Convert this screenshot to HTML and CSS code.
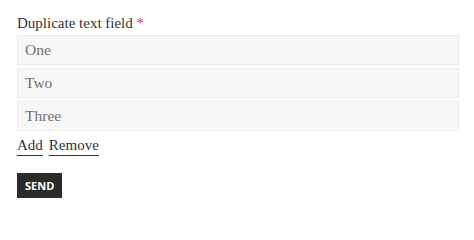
FILE: index.html
```
<!DOCTYPE html>
<html>
<head>
<meta charset="utf-8">
<link rel="stylesheet" href="styles.css">
</head>
<body>
<form class="form">
  <div class="label">Duplicate text field <span class="req">*</span></div>
  <div class="fields">
    <input class="field" type="text" placeholder="One">
    <input class="field" type="text" placeholder="Two">
    <input class="field" type="text" placeholder="Three">
  </div>
  <div class="links"><a class="link" href="#">Add</a><a class="link" href="#">Remove</a></div>
  <button class="send" type="button">SEND</button>
</form>
</body>
</html>
```
FILE: styles.css
```
html, body {
  margin: 0;
  background: #fff;
}
.form {
  padding: 13px 15px 0 17px;
  font-family: "Liberation Serif", serif;
  color: #333;
}
.label {
  font-size: 15px;
  line-height: 21px;
}
.req {
  color: #d6305f;
}
.fields {
  display: flex;
  flex-direction: column;
  gap: 3px;
  margin-top: 1px;
}
.field {
  box-sizing: border-box;
  width: 442px;
  height: 30px;
  margin: 0;
  padding: 0 7px;
  border: 1px solid #ebebeb;
  background: #f7f7f7;
  font-family: "Liberation Serif", serif;
  font-size: 15.5px;
  color: #666;
  outline: none;
}
.field::placeholder {
  color: #707070;
}
.links {
  display: flex;
  gap: 6px;
  margin-top: 4px;
  font-size: 15px;
  line-height: 20px;
}
.link {
  color: #333;
  text-decoration: none;
  border-bottom: 1px solid #333;
}
.send {
  margin-top: 17px;
  display: block;
  height: 25px;
  padding: 0 8px;
  border: none;
  background: #2b2b2b;
  color: #fff;
  font-family: "Open Sans", sans-serif;
  font-weight: 700;
  font-size: 11px;
}
```
